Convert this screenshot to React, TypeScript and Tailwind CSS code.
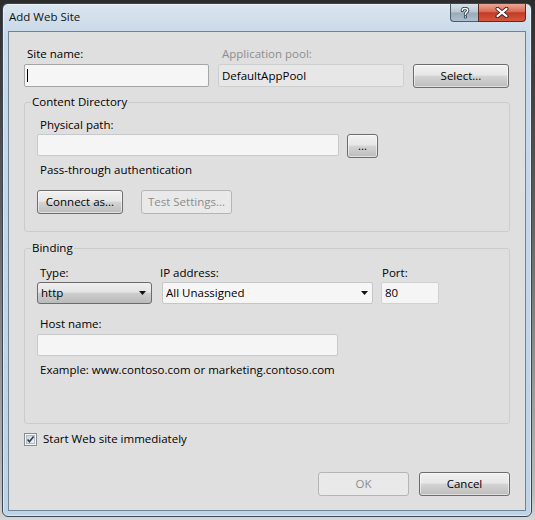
import React from "react";
import clsx from "clsx";

function Button({
  children,
  disabled,
  className,
}: {
  children: React.ReactNode;
  disabled?: boolean;
  className?: string;
}) {
  return (
    <div
      className={clsx(
        "flex h-[24px] items-center justify-center rounded-[3px] border leading-[16px]",
        disabled
          ? "border-[#b3b6b8] bg-[#e9e9e9] text-[#8c8c8c]"
          : "border-[#6c6c6c] bg-[linear-gradient(180deg,#f1f1f1_0%,#e7e7e7_45%,#d3d3d3_52%,#bcbcbc_100%)] text-black shadow-[inset_0_0_0_1px_rgba(255,255,255,0.55)]",
        className
      )}
    >
      {children}
    </div>
  );
}

function Arrow() {
  return (
    <svg width="7" height="4" viewBox="0 0 7 4" className="shrink-0">
      <path d="M0 0H7L3.5 4Z" fill="#111" />
    </svg>
  );
}

function Field({ className, children }: { className?: string; children?: React.ReactNode }) {
  return (
    <div
      className={clsx(
        "flex h-[22px] items-center rounded-[2px] border border-[#c6c8ca] bg-[#f5f5f5] px-[3px] leading-[16px]",
        className
      )}
    >
      {children}
    </div>
  );
}

function Group({ title, children, className }: { title: string; children: React.ReactNode; className?: string }) {
  return (
    <fieldset className={clsx("rounded-[3px] border border-[#c9cdd0] px-[6px]", className)}>
      <legend className="px-[1px] leading-[16px] text-black">{title}</legend>
      <div className="pl-[6px]">{children}</div>
    </fieldset>
  );
}

function CheckBox() {
  return (
    <svg width="13" height="13" viewBox="0 0 13 13" className="shrink-0">
      <defs>
        <linearGradient id="cbFill" x1="0" y1="0" x2="1" y2="1">
          <stop offset="0" stopColor="#c9d2dc" />
          <stop offset="1" stopColor="#f3f5f7" />
        </linearGradient>
      </defs>
      <rect x="0.5" y="0.5" width="12" height="12" fill="#f4f4f4" stroke="#8a8d90" />
      <rect x="2.5" y="2.5" width="8" height="8" fill="url(#cbFill)" stroke="#b4bcc6" />
      <path d="M3.6 6.6L5.4 8.7L9.6 3.4" fill="none" stroke="#2a3f58" strokeWidth="1.6" />
    </svg>
  );
}

export default function App() {
  return (
    <div className="h-[520px] w-[535px] overflow-hidden bg-[linear-gradient(180deg,#2c2c2c_0%,#5e5e5e_40%,#bdbdbd_95%,#d6d6d6_100%)] pl-[2px] pt-[3px] font-['Open_Sans','Noto_Sans',sans-serif] text-[11.5px] text-black">
      <div className="flex h-[514px] w-[530px] flex-col rounded-[6px] border border-[#3a4653] bg-[linear-gradient(180deg,#dae5ef_0%,#c9d9e8_6%,#bfd3e7_100%)] px-[5px] shadow-[inset_0_0_0_1px_rgba(255,255,255,0.45)]">
        {/* title bar */}
        <div className="flex h-[27px] shrink-0 items-start justify-between">
          <div className="pl-[1px] pt-[5px] leading-[16px] text-[#111]">Add Web Site</div>
          <div className="flex h-[18px]">
            <div className="flex w-[28px] items-center justify-center rounded-bl-[4px] border-b border-l border-[#4e5b68] bg-[linear-gradient(180deg,#d6e0e9_0%,#b8c6d3_48%,#98a9ba_52%,#aebfcf_100%)]">
              <svg width="10" height="12" viewBox="0 0 10 12">
                <path
                  d="M2.3 3.6C2.3 2.1 3.4 1.4 5 1.4C6.6 1.4 7.7 2.2 7.7 3.5C7.7 5 5.4 5.3 5.4 7.2"
                  fill="none"
                  stroke="#2c3a48"
                  strokeWidth="3.2"
                  strokeLinecap="round"
                />
                <circle cx="5.4" cy="10" r="1.6" fill="#2c3a48" />
                <path
                  d="M2.3 3.6C2.3 2.1 3.4 1.4 5 1.4C6.6 1.4 7.7 2.2 7.7 3.5C7.7 5 5.4 5.3 5.4 7.2"
                  fill="none"
                  stroke="#ffffff"
                  strokeWidth="1.5"
                  strokeLinecap="round"
                />
                <circle cx="5.4" cy="10" r="0.8" fill="#ffffff" />
              </svg>
            </div>
            <div className="flex w-[48px] items-center justify-center rounded-br-[4px] border border-t-0 border-[#5b2a22] bg-[linear-gradient(180deg,#eca796_0%,#d86a55_45%,#c23a24_52%,#d4583f_100%)]">
              <svg width="14" height="11" viewBox="0 0 14 11">
                <path d="M2.5 1.8L11.5 9.2M11.5 1.8L2.5 9.2" stroke="#3b1d18" strokeWidth="4" strokeLinecap="round" />
                <path d="M2.5 1.8L11.5 9.2M11.5 1.8L2.5 9.2" stroke="#ffffff" strokeWidth="2.2" strokeLinecap="round" />
              </svg>
            </div>
          </div>
        </div>

        {/* client area */}
        <div className="flex h-[480px] shrink-0 flex-col border border-[#6d8499] bg-[#dfdfdf] px-[15px] pt-[14px]">
          {/* site name / application pool */}
          <div className="flex gap-[9px]">
            <div className="flex w-[185px] flex-col gap-[2px]">
              <div className="pl-[3px] leading-[16px]">Site name:</div>
              <div className="flex h-[23px] items-center rounded-[2px] border border-[#a4a7aa] bg-[#f6f6f6] pl-[2px]">
                <div className="h-[13px] w-[1px] bg-black" />
              </div>
            </div>
            <div className="flex w-[186px] flex-col gap-[2px]">
              <div className="pl-[4px] leading-[16px] text-[#8d8d8d]">Application pool:</div>
              <div className="flex h-[23px] items-center rounded-[2px] border border-[#cdcfd1] bg-[#e7e7e7] px-[3px] leading-[16px]">
                DefaultAppPool
              </div>
            </div>
            <div className="flex flex-col justify-end">
              <Button className="mb-[-1px] w-[96px]">Select...</Button>
            </div>
          </div>

          {/* content directory */}
          <Group title="Content Directory" className="mt-[7px] pb-[17px]">
            <div className="pl-[3px] pt-[7px] leading-[16px]">Physical path:</div>
            <div className="mt-[1px] flex items-start gap-[8px]">
              <Field className="w-[302px]" />
              <Button className="w-[31px]">...</Button>
            </div>
            <div className="mt-[4px] pl-[3px] leading-[16px]">Pass-through authentication</div>
            <div className="mt-[12px] flex gap-[18px]">
              <Button className="w-[86px]">Connect as...</Button>
              <Button disabled className="w-[91px]">
                Test Settings...
              </Button>
            </div>
          </Group>

          {/* binding */}
          <Group title="Binding" className="mt-[8px] pb-[45px]">
            <div className="flex pt-[9px]">
              <div className="flex w-[115px] flex-col gap-[1px]">
                <div className="pl-[3px] leading-[16px]">Type:</div>
                <div className="flex h-[22px] items-center justify-between rounded-[3px] border border-[#6c6c6c] bg-[linear-gradient(180deg,#efefef_0%,#e4e4e4_45%,#cdcdcd_52%,#bababa_100%)] pl-[3px] pr-[5px] leading-[16px]">
                  <span>http</span>
                  <Arrow />
                </div>
              </div>
              <div className="ml-[10px] flex w-[211px] flex-col gap-[1px]">
                <div className="-ml-[2px] leading-[16px]">IP address:</div>
                <div className="flex h-[22px] items-center justify-between rounded-[2px] border border-[#c4c6c8] bg-[#f6f6f6] pl-[3px] pr-[4px] leading-[16px]">
                  <span>All Unassigned</span>
                  <Arrow />
                </div>
              </div>
              <div className="ml-[8px] flex w-[58px] flex-col gap-[1px]">
                <div className="pl-[1px] leading-[16px]">Port:</div>
                <Field className="w-[58px] border-[#cfd1d3] bg-[#f1f1f1] px-[2px]">80</Field>
              </div>
            </div>
            <div className="mt-[12px] pl-[3px] leading-[16px]">Host name:</div>
            <Field className="mt-[2px] w-[301px]" />
            <div className="mt-[6px] pl-[3px] leading-[16px]">Example: www.contoso.com or marketing.contoso.com</div>
          </Group>

          {/* start immediately */}
          <div className="mt-[7px] flex h-[16px] items-center gap-[6px] leading-[16px]">
            <CheckBox />
            <span>Start Web site immediately</span>
          </div>

          {/* dialog buttons */}
          <div className="mt-[25px] flex justify-end gap-[10px]">
            <Button disabled className="w-[91px]">
              OK
            </Button>
            <Button className="w-[91px]">Cancel</Button>
          </div>
        </div>
      </div>
    </div>
  );
}
